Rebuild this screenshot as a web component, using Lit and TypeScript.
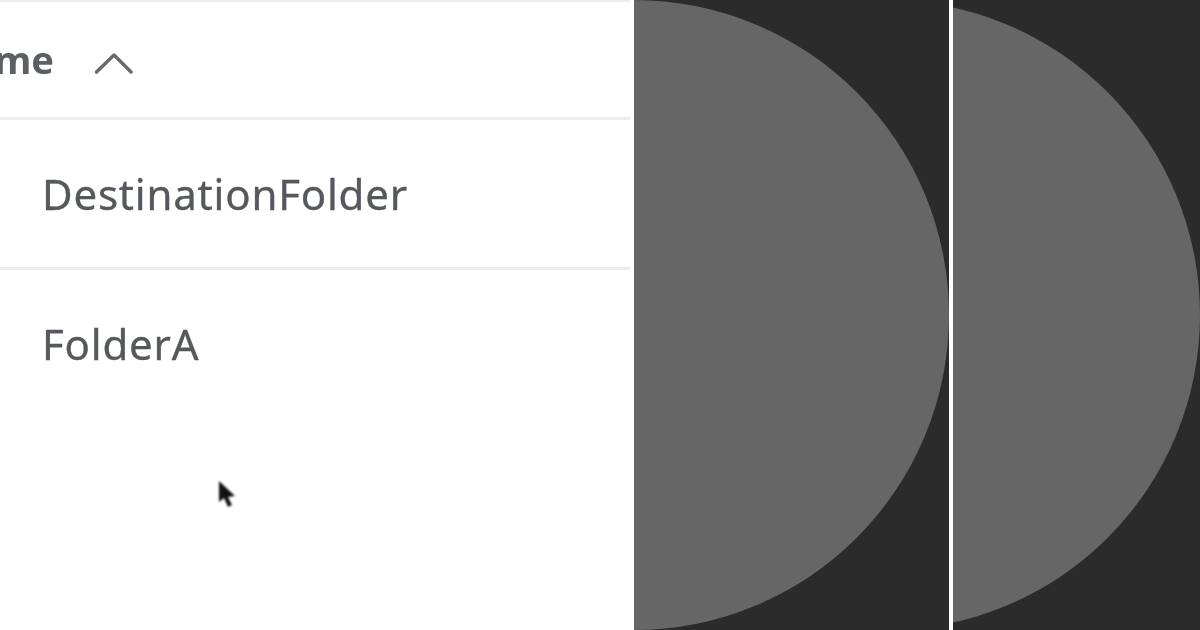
import { LitElement, html, css } from "lit";
import { customElement } from "lit/decorators.js";

@customElement("app-root")
export class AppRoot extends LitElement {
  static styles = css`
    :host { display: block; width: 1200px; height: 630px; overflow: hidden; background: #fff; }
    .page { display: flex; width: 1200px; height: 630px; font-family: "Noto Sans", "Open Sans", sans-serif; color: #55585c; }
    .table { position: relative; width: 634px; flex: none; padding-right: 4px; background: #fff; overflow: hidden; box-sizing: border-box; }
    .head { display: flex; align-items: center; height: 115px; border-top: 2px solid #eaeded; border-bottom: 3px solid #eaeded; box-sizing: content-box; }
    .label { width: 54px; flex: none; display: flex; justify-content: flex-end; overflow: hidden; font-size: 38px; font-weight: 700; line-height: 115px; height: 115px; filter: blur(0.7px); color: #5c5f63; }
    .chev { display: block; width: 40px; height: 24px; margin-left: 40px; margin-top: 7px; filter: blur(0.5px); }
    .row { display: flex; align-items: center; height: 147px; padding-left: 42px; border-bottom: 3px solid #eaeded; font-size: 42px; letter-spacing: 0.8px; }
    .row.last { border-bottom: none; }
    .name { filter: blur(0.7px); -webkit-text-stroke: 0.35px #55585c; }
    .cursor { position: absolute; left: 216px; top: 478px; width: 22px; height: 34px; filter: blur(0.8px); }
    .stage { display: flex; flex: none; height: 630px; background: #2b2b2b; overflow: hidden; align-items: center; justify-content: flex-end; }
    .one { width: 315px; }
    .two { width: 247px; margin-left: 4px; }
    .disc { flex: none; width: 630px; height: 630px; border-radius: 50%; background: #666; }
    .two .disc { margin-right: 0.5px; }
  `;

  render() {
    return html`<div class="page">
      <section class="table">
        <div class="head">
          <div class="label"><span>Name</span></div>
          <svg class="chev" viewBox="0 0 40 24" fill="none" stroke="#66696e" stroke-width="3.4" stroke-linecap="round" stroke-linejoin="round">
            <path d="M2.5 21 L20 4 L37 21" />
          </svg>
        </div>
        <div class="row"><span class="name">DestinationFolder</span></div>
        <div class="row last"><span class="name">FolderA</span></div>
        <svg class="cursor" viewBox="0 0 22 34">
          <path d="M3 3 L3 24 L8 20 L12 29 L16 27 L12 19 L19 18 Z" fill="#111" />
        </svg>
      </section>
      <div class="stage one"><div class="disc"></div></div>
      <div class="stage two"><div class="disc"></div></div>
    </div>`;
  }
}
